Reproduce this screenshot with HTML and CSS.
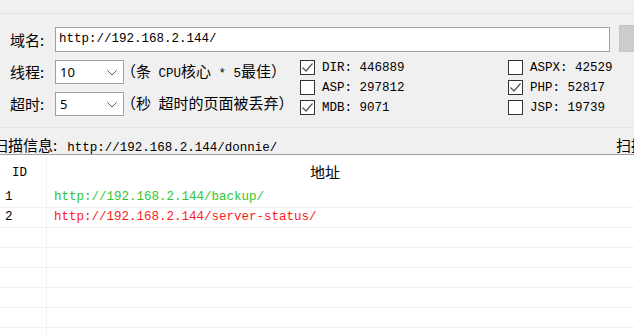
FILE: index.html
```html
<!DOCTYPE html>
<html lang="zh-CN">
<head>
    <meta charset="UTF-8">
    <meta name="viewport" content="width=device-width, initial-scale=1.0">
    <title>扫描</title>
    <link rel="stylesheet" href="styles.css">
</head>
<body>
    <div class="topbar"></div>

    <div class="panel">
        <div class="row-domain">
            <span class="label">域名:</span>
            <div class="textbox mono">http://192.168.2.144/</div>
            <div class="btn"></div>
        </div>

        <div class="options">
            <div class="settings">
                <div class="setting">
                    <span class="label">线程:</span>
                    <div class="combo"><span>10</span>
                        <svg width="10" height="6" viewBox="0 0 10 6"><path d="M0.5 0.5 L5 5 L9.5 0.5" fill="none" stroke="#555" stroke-width="1"/></svg>
                    </div>
                    <span class="hint">（条<span class="mono"> CPU</span>核心<span class="mono"> * 5</span>最佳）</span>
                </div>
                <div class="setting">
                    <span class="label">超时:</span>
                    <div class="combo"><span>5</span>
                        <svg width="10" height="6" viewBox="0 0 10 6"><path d="M0.5 0.5 L5 5 L9.5 0.5" fill="none" stroke="#555" stroke-width="1"/></svg>
                    </div>
                    <span class="hint">（秒<span class="mono"> </span>超时的页面被丢弃）</span>
                </div>
            </div>

            <div class="checks">
                <label class="check"><span class="box on"></span><span class="mono">DIR: 446889</span></label>
                <label class="check"><span class="box"></span><span class="mono">ASPX: 42529</span></label>
                <label class="check"><span class="box"></span><span class="mono">ASP: 297812</span></label>
                <label class="check"><span class="box on"></span><span class="mono">PHP: 52817</span></label>
                <label class="check"><span class="box on"></span><span class="mono">MDB: 9071</span></label>
                <label class="check"><span class="box"></span><span class="mono">JSP: 19739</span></label>
            </div>
        </div>
    </div>

    <div class="status">
        <span class="status-left">扫描信息:<span class="mono status-url">http://192.168.2.144/donnie/</span></span>
        <span class="status-right">扫描速度</span>
    </div>

    <div class="grid">
        <div class="head id mono">ID</div>
        <div class="head url">地址</div>

        <div class="cell id mono">1</div>
        <div class="cell url mono ok">http://192.168.2.144/backup/</div>
        <div class="cell id mono">2</div>
        <div class="cell url mono bad">http://192.168.2.144/server-status/</div>
        <div class="cell id"></div><div class="cell url"></div>
        <div class="cell id"></div><div class="cell url"></div>
        <div class="cell id"></div><div class="cell url"></div>
        <div class="cell id"></div><div class="cell url"></div>
        <div class="cell id"></div><div class="cell url"></div>
        <div class="cell id"></div><div class="cell url"></div>
        <div class="cell id"></div><div class="cell url"></div>
    </div>
</body>
</html>
```

FILE: styles.css
```css
html, body {
    margin: 0;
    padding: 0;
}
body {
    width: 634px;
    height: 336px;
    overflow: hidden;
    background-color: #f0f0f0;
    font-family: "Noto Sans CJK SC", "Noto Sans", sans-serif;
    font-size: 15px;
    color: #000;
}
.mono {
    font-family: "Liberation Mono", "Noto Sans CJK SC", monospace;
    font-size: 12.5px;
}
.topbar {
    height: 13px;
    border-bottom: 1px solid #e2e2e2;
}
.panel {
    padding: 13px 0 11px 10px;
    border-bottom: 1px solid #e2e2e2;
}
.row-domain {
    display: flex;
    align-items: center;
    width: 700px;
}
.label {
    width: 45px;
    line-height: 20px;
    flex-shrink: 0;
}
.textbox {
    box-sizing: border-box;
    width: 555px;
    height: 25px;
    line-height: 23px;
    padding-left: 3px;
    background: white;
    border: 1px solid #a0a0a0;
}
.btn {
    box-sizing: border-box;
    width: 60px;
    height: 27px;
    margin-left: 9px;
    margin-top: -2px;
    background: #cccccc;
    border: 1px solid #c4c4c4;
}
.options {
    display: flex;
    height: 56px;
    margin-top: 8px;
}
.settings {
    width: 290px;
    display: flex;
    flex-direction: column;
    gap: 8px;
}
.setting {
    display: flex;
    align-items: center;
    height: 24px;
}
.combo {
    box-sizing: border-box;
    width: 69px;
    height: 24px;
    display: flex;
    align-items: center;
    justify-content: space-between;
    padding: 0 6px 0 4px;
    background: white;
    border: 1px solid #a0a0a0;
    font-family: "Noto Sans", sans-serif;
    font-size: 13px;
}
.combo svg {
    margin-top: 1px;
}
.hint {
    margin-left: -3px;
    line-height: 20px;
    white-space: nowrap;
}
.checks {
    display: grid;
    grid-template-columns: 208px auto;
    grid-auto-rows: 20px;
}
.check {
    display: flex;
    align-items: flex-start;
    gap: 7px;
}
.check .mono {
    line-height: 16px;
}
.box {
    box-sizing: border-box;
    width: 15px;
    height: 15px;
    background: white;
    border: 1px solid #333;
}
.box.on {
    background: white url("data:image/svg+xml;utf8,<svg xmlns='http://www.w3.org/2000/svg' width='13' height='13'><path d='M1.5 6.5 L5 10 L11.5 2.5' fill='none' stroke='%23555' stroke-width='1.2'/></svg>") no-repeat center;
}
.status {
    display: flex;
    align-items: flex-start;
    width: 676px;
    height: 19px;
    padding-top: 7px;
    line-height: 19px;
    border-bottom: 1px solid #a0a0a0;
    white-space: nowrap;
}
.status-left {
    margin-left: -7px;
}
.status-url {
    padding-left: 10px;
}
.status-right {
    margin-left: auto;
}
.grid {
    display: grid;
    grid-template-columns: 47px 1fr;
    grid-template-rows: 33px;
    grid-auto-rows: 20px;
    background: white;
    height: 200px;
}
.head {
    display: flex;
    align-items: center;
}
.head.id {
    padding-left: 12px;
    border-right: 1px solid #f0f0f0;
    margin-top: 3px;
}
.head.url {
    padding-left: 263px;
}
.cell {
    box-sizing: border-box;
    border-bottom: 1px solid #f0f0f0;
    line-height: 19px;
    white-space: nowrap;
}
.cell.id {
    padding-left: 5px;
    border-right: 1px solid #f0f0f0;
}
.cell.url {
    padding-left: 7px;
}
.ok {
    color: #2ec82e;
}
.bad {
    color: #ff1a1a;
}
```
